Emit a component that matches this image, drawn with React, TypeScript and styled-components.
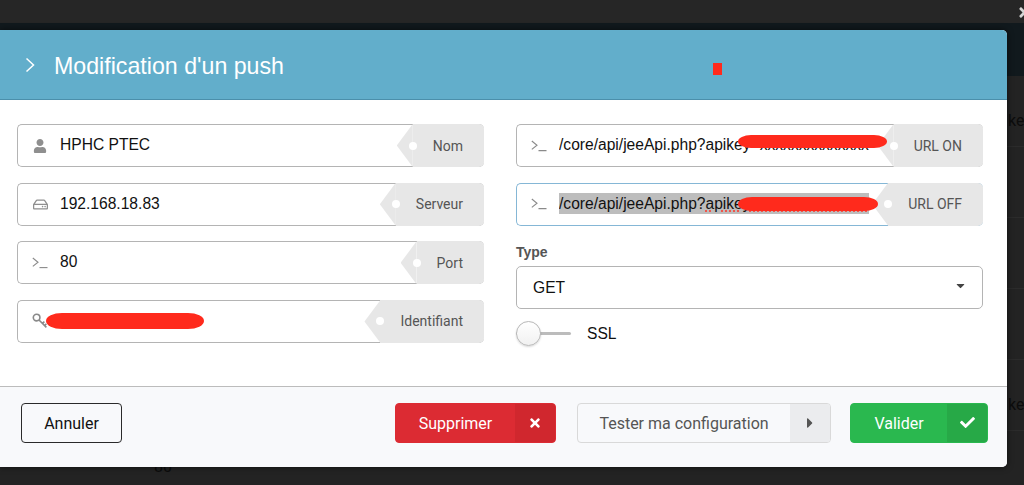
import React, { FunctionComponent } from 'react';
import styled, { createGlobalStyle } from 'styled-components';
import { FaUser, FaRegHdd, FaTimes, FaCheck, FaCaretRight, FaCaretDown } from 'react-icons/fa';

const GlobalStyle = createGlobalStyle`
  html, body {
    margin: 0;
    padding: 0;
    height: 485px;
    overflow: hidden;
    background: #222222;
  }
`;

const Page = styled.div`
  position: relative;
  width: 1024px;
  height: 485px;
  overflow: hidden;
  background: #232323;
  font-family: "Liberation Sans", Arial, sans-serif;
`;

// what sits behind the modal
const TopBar = styled.div`
  height: 23px;
  background: #262626;
  display: flex;
  justify-content: flex-end;
  align-items: center;
  color: #d4d4d4;
  overflow: hidden;
  svg {
    margin-right: -8px;
    margin-top: 1px;
  }
`;

const TopBand = styled.div`
  height: 53px;
  background: #11191d;
`;

const BackRow = styled.div<{ $inset: number; $top: number; $height: number }>`
  box-sizing: border-box;
  height: ${(p) => p.$height}px;
  padding: ${(p) => p.$top}px 0 0 ${(p) => p.$inset}px;
  border-bottom: 1px solid #2b2b2b;
  color: #0c0c0c;
  font-family: Roboto, sans-serif;
  font-size: 16px;
  line-height: 20px;
  white-space: nowrap;
`;

const Modal = styled.div`
  position: absolute;
  top: 30px;
  left: 0;
  width: 1007px;
  height: 437px;
  display: flex;
  flex-direction: column;
  background: #ffffff;
  border-radius: 0 5px 5px 0;
  overflow: hidden;
  box-shadow: 0 0 6px rgba(0, 0, 0, 0.6);
`;

const Header = styled.div`
  position: relative;
  box-sizing: border-box;
  height: 70px;
  flex: none;
  display: flex;
  align-items: center;
  padding-left: 25px;
  gap: 19px;
  background: #62aecb;
  border-bottom: 1px solid #4b8fab;
  color: #ffffff;
`;

const Title = styled.h1`
  margin: 2px 0 0;
  font-size: 23.2px;
  font-weight: 400;
  line-height: 28px;
`;

const RedMark = styled.div`
  position: absolute;
  left: 713px;
  top: 33px;
  width: 9px;
  height: 12px;
  background: #ff2a1c;
`;

const Body = styled.div`
  box-sizing: border-box;
  height: 286px;
  flex: none;
  display: grid;
  grid-template-columns: 467px 467px;
  column-gap: 32px;
  padding: 24px 0 0 17px;
`;

const Column = styled.div`
  display: flex;
  flex-direction: column;
  gap: 15.67px;
`;

const Field = styled.div<{ $focused?: boolean }>`
  position: relative;
  box-sizing: border-box;
  height: 43px;
  display: flex;
  align-items: stretch;
  border: 1px solid ${(p) => (p.$focused ? '#85b7d6' : '#b4b4b4')};
  border-right: none;
  border-radius: 5px;
  background: #ffffff;
`;

const IconSlot = styled.div`
  flex: none;
  width: 42px;
  display: flex;
  align-items: center;
  justify-content: center;
  padding-left: 2px;
  box-sizing: border-box;
  color: #8f8f8f;
`;

const Value = styled.div`
  flex: 1;
  min-width: 0;
  margin-right: 16px;
  overflow: hidden;
  white-space: nowrap;
  color: #111111;
  font-size: 15.6px;
  line-height: 40px;
`;

const Selected = styled.span`
  background: #bdbdbd;
  padding: 2px 0;
`;

const Misspelled = styled.span`
  text-decoration: underline dotted #f0564c 2px;
  text-underline-offset: 2px;
`;

const Tag = styled.div`
  position: relative;
  flex: none;
  margin: -1px 0;
  padding: 0 21px 0 20px;
  display: flex;
  align-items: center;
  background: #e7e7e7;
  border-radius: 0 5px 5px 0;
  color: #555555;
  font-family: Roboto, sans-serif;
  font-size: 14px;
  &::before {
    content: "";
    position: absolute;
    left: -16px;
    top: 0;
    bottom: 0;
    width: 16px;
    background: #e7e7e7;
    clip-path: polygon(100% 0, 0 50%, 100% 100%);
  }
  &::after {
    content: "";
    position: absolute;
    left: -4px;
    top: 50%;
    width: 8px;
    height: 8px;
    margin-top: -4px;
    border-radius: 50%;
    background: #ffffff;
  }
`;

const Scribble = styled.div<{ $left: number; $width: number; $top: number; $height: number }>`
  position: absolute;
  z-index: 2;
  left: ${(p) => p.$left}px;
  top: ${(p) => p.$top}px;
  width: ${(p) => p.$width}px;
  height: ${(p) => p.$height}px;
  border-radius: ${(p) => p.$height}px / 50%;
  background: #ff2a1c;
`;

const SettingsBlock = styled.div`
  margin-top: 1px;
`;

const FieldLabel = styled.label`
  display: block;
  height: 20px;
  margin-bottom: 4px;
  color: #555555;
  font-size: 14px;
  font-weight: 700;
  line-height: 20px;
`;

const SelectBox = styled.div`
  box-sizing: border-box;
  height: 43px;
  padding: 0 15px 0 16px;
  display: flex;
  align-items: center;
  justify-content: space-between;
  border: 1px solid #b4b4b4;
  border-radius: 5px;
  color: #111111;
  font-size: 15.6px;
  svg {
    color: #444444;
    margin-top: -4px;
  }
`;

const SwitchRow = styled.div`
  height: 26px;
  margin-top: 11px;
  display: flex;
  align-items: center;
  gap: 16px;
  color: #111111;
  font-size: 15.6px;
`;

const SwitchLabel = styled.span`
  margin-top: 2px;
`;

const SwitchTrack = styled.div`
  position: relative;
  width: 55px;
  height: 3px;
  background: #bcbcbc;
  border-radius: 2px;
`;

const SwitchKnob = styled.div`
  position: absolute;
  left: 0;
  top: -11px;
  box-sizing: border-box;
  width: 25px;
  height: 25px;
  border: 1px solid #b8b8b8;
  border-radius: 50%;
  background: linear-gradient(#ffffff, #f1f1f1);
  box-shadow: 0 1px 2px rgba(0, 0, 0, 0.15);
`;

const Footer = styled.div`
  flex: 1;
  display: flex;
  align-items: center;
  gap: 19px;
  padding: 0 19px 9px 21px;
  background: #f8f9fb;
  border-top: 1px solid #bcbcbc;
`;

const CancelButton = styled.button`
  box-sizing: border-box;
  width: 101px;
  height: 40px;
  margin-right: auto;
  padding: 2px 0 0;
  background: transparent;
  border: 1px solid #2a2a2a;
  border-radius: 4px;
  color: #111111;
  font-family: Roboto, sans-serif;
  font-size: 16px;
`;

const tones = {
  danger: { bg: '#dc2b33', side: '#d0272e', text: '#ffffff', border: '#dc2b33' },
  plain: { bg: '#f8f9fb', side: '#ebecee', text: '#555555', border: '#d9d9d9' },
  success: { bg: '#2ab84f', side: '#27a947', text: '#ffffff', border: '#2ab84f' },
};

const SplitButton = styled.button<{ $tone: keyof typeof tones; $width: number; $lead?: number }>`
  box-sizing: border-box;
  width: ${(p) => p.$width}px;
  height: 40px;
  margin-left: ${(p) => p.$lead || 0}px;
  padding: 0;
  display: flex;
  align-items: stretch;
  overflow: hidden;
  background: ${(p) => tones[p.$tone].bg};
  border: 1px solid ${(p) => tones[p.$tone].border};
  border-radius: 4px;
  color: ${(p) => tones[p.$tone].text};
  font-family: Roboto, sans-serif;
  font-size: 16px;
  & > span:first-child {
    flex: 1;
    padding-top: 1px;
    display: flex;
    align-items: center;
    justify-content: center;
  }
  & > span:last-child {
    flex: none;
    width: 40px;
    display: flex;
    align-items: center;
    justify-content: center;
    background: ${(p) => tones[p.$tone].side};
  }
`;

const Chevron = () => (
  <svg width="10" height="16" viewBox="0 0 10 16" fill="none" stroke="#ffffff" strokeWidth="1.5">
    <path d="M1.5 1.5 L8.5 8 L1.5 14.5" />
  </svg>
);

const TerminalIcon = () => (
  <svg width="16" height="12" viewBox="0 0 16 12" fill="none" stroke="#8a8a8a" strokeWidth="1.1">
    <path d="M0.8 1 L6 5.2 L0.8 9.4" />
    <path d="M7.5 10.6 H15.5" />
  </svg>
);

const KeyIcon = () => (
  <svg width="16" height="16" viewBox="0 0 16 16" fill="none" stroke="#8a8a8a" strokeWidth="1.6">
    <circle cx="4.6" cy="4.6" r="3.3" />
    <path d="M7 7 L14.4 14.4 M10.4 10.4 L12.4 8.6 M12.6 12.6 L14.4 10.8" />
  </svg>
);

interface PushFieldProps {
  icon: React.ReactNode;
  label: string;
  children?: React.ReactNode;
}

const PushField: FunctionComponent<PushFieldProps> = ({ icon, label, children }) => (
  <Field>
    <IconSlot>{icon}</IconSlot>
    <Value>{children}</Value>
    <Tag>{label}</Tag>
  </Field>
);

export default function App() {
  return (
    <Page>
      <GlobalStyle />
      <TopBar>
        <FaTimes size={15} />
      </TopBar>
      <TopBand />
      <BackRow $inset={1008} $top={35} $height={71}>ke</BackRow>
      <BackRow $inset={1008} $top={0} $height={71} />
      <BackRow $inset={1008} $top={0} $height={71} />
      <BackRow $inset={1008} $top={0} $height={71} />
      <BackRow $inset={1008} $top={35} $height={71}>ke</BackRow>
      <BackRow $inset={154} $top={26} $height={71}>80</BackRow>

      <Modal>
        <Header>
          <Chevron />
          <Title>Modification d'un push</Title>
          <RedMark />
        </Header>
        <Body>
          <Column>
            <PushField icon={<FaUser size={14} />} label="Nom">HPHC PTEC</PushField>
            <PushField icon={<FaRegHdd size={15} />} label="Serveur">192.168.18.83</PushField>
            <PushField icon={<TerminalIcon />} label="Port">80</PushField>
            <Field>
              <IconSlot><KeyIcon /></IconSlot>
              <Value>xxxxxxxxxx</Value>
              <Tag>Identifiant</Tag>
              <Scribble $left={28} $width={158} $top={12} $height={16} />
            </Field>
          </Column>
          <Column>
            <Field>
              <IconSlot><TerminalIcon /></IconSlot>
              <Value>/core/api/jeeApi.php?apikey=xxxxxxxxxxxxxx</Value>
              <Tag>URL ON</Tag>
              <Scribble $left={221} $width={149} $top={10} $height={13} />
            </Field>
            <Field $focused>
              <IconSlot><TerminalIcon /></IconSlot>
              <Value>
                <Selected>/core/api/jeeApi.php?<Misspelled>apikey=xxxxxxxxxxxxxx</Misspelled></Selected>
              </Value>
              <Tag>URL OFF</Tag>
              <Scribble $left={221} $width={140} $top={13} $height={14} />
            </Field>
            <SettingsBlock>
              <FieldLabel>Type</FieldLabel>
              <SelectBox>
                GET
                <FaCaretDown size={13} />
              </SelectBox>
              <SwitchRow>
                <SwitchTrack>
                  <SwitchKnob />
                </SwitchTrack>
                <SwitchLabel>SSL</SwitchLabel>
              </SwitchRow>
            </SettingsBlock>
          </Column>
        </Body>
        <Footer>
          <CancelButton>Annuler</CancelButton>
          <SplitButton $tone="danger" $width={161}>
            <span>Supprimer</span>
            <span><FaTimes size={14} /></span>
          </SplitButton>
          <SplitButton $tone="plain" $width={254} $lead={2}>
            <span>Tester ma configuration</span>
            <span><FaCaretRight size={16} /></span>
          </SplitButton>
          <SplitButton $tone="success" $width={138}>
            <span>Valider</span>
            <span><FaCheck size={15} /></span>
          </SplitButton>
        </Footer>
      </Modal>
    </Page>
  );
}
